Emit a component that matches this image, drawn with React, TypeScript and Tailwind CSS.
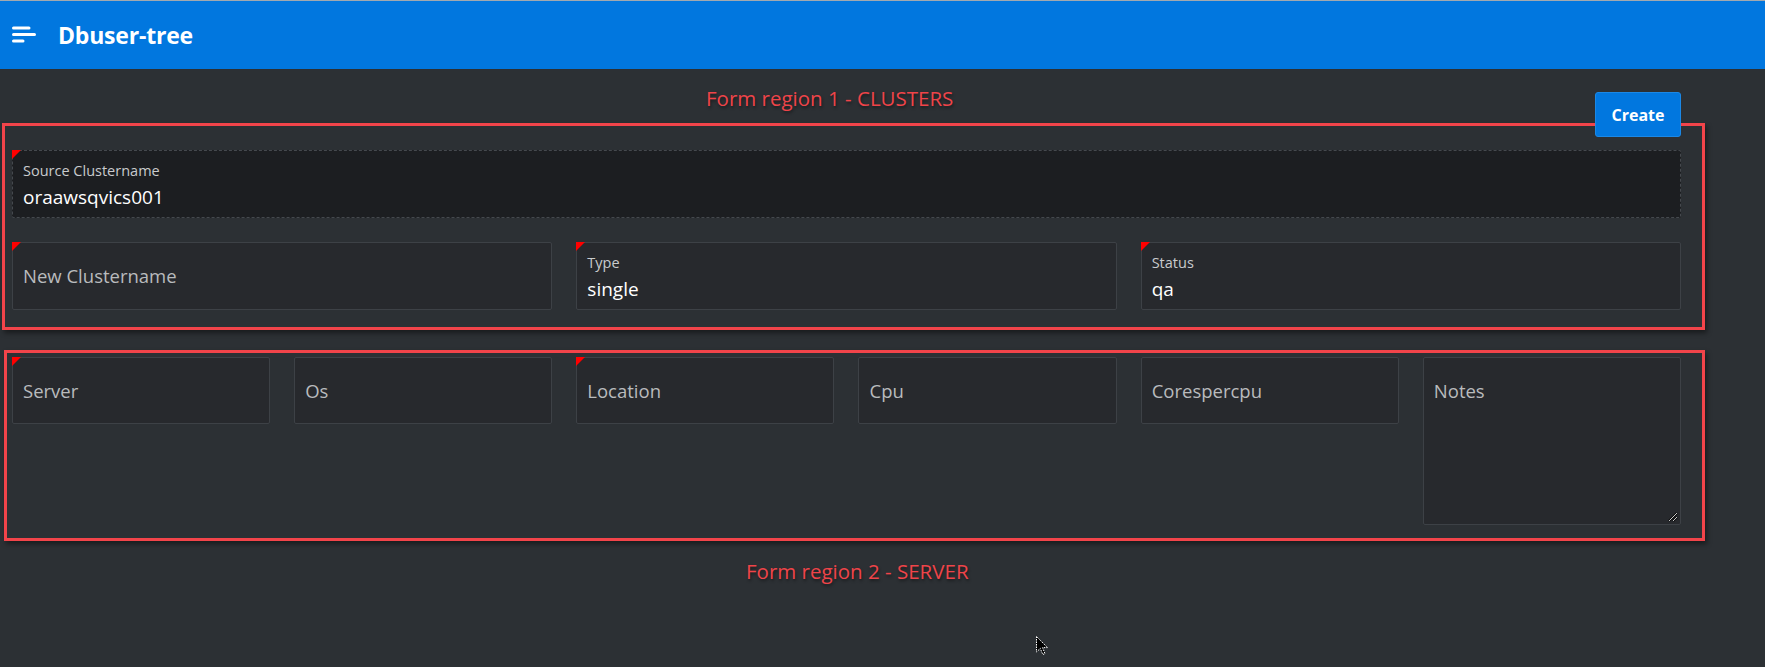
import React from 'react';

const font = { fontFamily: '"Open Sans", "Noto Sans", sans-serif' };

type FieldProps = {
  label: string;
  value?: string;
  required?: boolean;
  readOnly?: boolean;
  textarea?: boolean;
  className?: string;
};

const Field = ({ label, value, required, readOnly, textarea, className = '' }: FieldProps) => {
  const frame = readOnly
    ? 'bg-[#1c1e21] border border-dashed border-[#45494e]'
    : 'bg-[#27292d] border border-[#3d4146]';
  return (
    <div className={`relative rounded-[2px] ${frame} ${className}`}>
      {required && (
        <div className="absolute left-[-1px] top-[-1px] w-0 h-0 border-t-[9px] border-r-[9px] border-t-[#ff0000] border-r-transparent" />
      )}
      {value !== undefined ? (
        <div className="px-[10px] pt-[10px]">
          <div className="text-[14.5px] leading-[20px] text-[#c9cbcd]">{label}</div>
          <div className="mt-[3px] text-[19px] leading-[26px] text-white">{value}</div>
        </div>
      ) : textarea ? (
        <div className="px-[10px] pt-[20px] text-[18.5px] leading-[26px] text-[#b9bbbd]">{label}</div>
      ) : (
        <div className="flex h-full items-center px-[10px] text-[18.5px] leading-[26px] text-[#b9bbbd]">{label}</div>
      )}
      {textarea && (
        <svg className="absolute right-[2px] bottom-[2px]" width="10" height="10" viewBox="0 0 10 10">
          <path d="M9 1 L1 9 M9 5 L5 9" stroke="#0d0d0d" strokeWidth="2.4" />
          <path d="M9 1 L1 9 M9 5 L5 9" stroke="#c8c8c8" strokeWidth="1" />
        </svg>
      )}
    </div>
  );
};

export default function App() {
  return (
    <div className="relative min-h-[667px] w-full bg-[#2c3034] overflow-hidden" style={font}>
      {/* Header */}
      <header className="h-[69px] bg-[#0177df] border-t border-[#a3a9af] flex items-center">
        <svg className="ml-[12px]" width="24" height="18" viewBox="0 0 24 18">
          <path d="M1.5 2 H17 M1.5 8.5 H22.5 M1.5 15 H11" stroke="#ffffff" strokeWidth="3" strokeLinecap="round" />
        </svg>
        <h1 className="ml-[22px] text-[23px] font-bold text-white leading-none tracking-[-0.2px]">Dbuser-tree</h1>
      </header>

      {/* Title row */}
      <div className="ml-[12px] w-[1669px] h-[54px] flex items-start">
        <div className="pl-[694px] pt-[15px] text-[20.5px] leading-[28px] text-[#ef4449] [text-shadow:1px_2px_3px_rgba(0,0,0,0.45)]">
          Form region 1 - CLUSTERS
        </div>
        <button className="relative z-10 ml-auto mt-[23px] h-[45px] w-[86px] rounded-[3px] bg-[#0177df] border border-[#1b88e6] text-[16px] font-bold text-white">
          Create
        </button>
      </div>

      {/* Region 1 */}
      <section className="ml-[2px] w-[1703px] border-[3px] border-[#f2444a] shadow-[2px_3px_5px_rgba(0,0,0,0.45)] pl-[7px] pr-[21px] pt-[24px] pb-[17px]">
        <div className="grid grid-cols-3 gap-x-[24px] gap-y-[24px]">
          <Field className="col-span-3 h-[68px]" label="Source Clustername" value="oraawsqvics001" required readOnly />
          <Field className="h-[68px]" label="New Clustername" required />
          <Field className="h-[68px]" label="Type" value="single" required />
          <Field className="h-[68px]" label="Status" value="qa" required />
        </div>
      </section>

      {/* Region 2 */}
      <section className="mt-[20px] ml-[4px] w-[1701px] border-[3px] border-[#f2444a] shadow-[2px_3px_5px_rgba(0,0,0,0.45)] pl-[5px] pr-[21px] pt-[4px] pb-[13px]">
        <div className="grid grid-cols-6 gap-x-[24px] items-start">
          <Field className="h-[67px]" label="Server" required />
          <Field className="h-[67px]" label="Os" />
          <Field className="h-[67px]" label="Location" required />
          <Field className="h-[67px]" label="Cpu" />
          <Field className="h-[67px]" label="Corespercpu" />
          <Field className="h-[168px]" label="Notes" textarea />
        </div>
      </section>

      <div className="mt-[16px] pl-[746px] text-[20.5px] leading-[28px] text-[#ef4449] [text-shadow:1px_2px_3px_rgba(0,0,0,0.45)]">
        Form region 2 - SERVER
      </div>

      {/* Mouse pointer */}
      <svg className="absolute left-[1036px] top-[636px]" width="13" height="20" viewBox="0 0 13 20">
        <path d="M0.5 0.5 L0.5 16 L4.3 12.4 L6.8 18.5 L9 17.6 L6.5 11.6 L11.5 11.6 Z" fill="#000000" stroke="#ffffff" strokeWidth="1" strokeDasharray="1.5 1" />
      </svg>
    </div>
  );
}
